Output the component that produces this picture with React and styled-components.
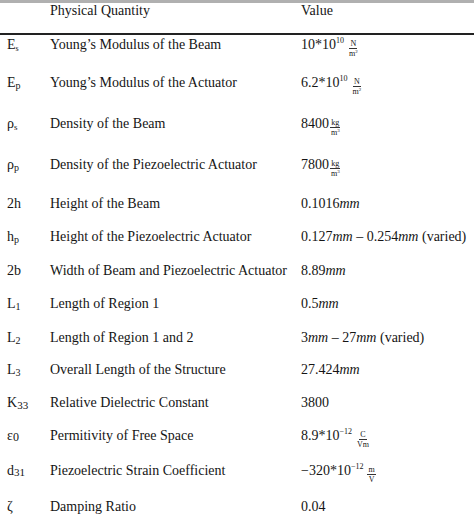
import styled, { createGlobalStyle } from "styled-components";

const GlobalStyle = createGlobalStyle`
  html, body {
    margin: 0;
    padding: 0;
    background: #ffffff;
  }
  body {
    font-family: "Liberation Serif", serif;
    color: #151515;
  }
`;

const Table = styled.div`
  width: 474px;
  display: flex;
  flex-direction: column;
  font-family: "Liberation Serif", "DejaVu Serif", serif;
`;

const TopRule = styled.div`
  height: 3px;
  background: #b0b0b0;
`;

const HeaderRow = styled.div`
  display: grid;
  grid-template-columns: 50px 251px 1fr;
  height: 30px;
  font-size: 14px;
  line-height: 16px;
  border-bottom: 2px solid #222222;
  margin-bottom: 1px;
`;

const Row = styled.div`
  display: grid;
  grid-template-columns: 50px 251px 1fr;
  height: ${({ h }) => h}px;
  font-size: 14px;
  line-height: 18px;
  align-items: start;
`;

const Symbol = styled.div`
  padding-left: 7px;
  white-space: nowrap;
`;

const Cell = styled.div`
  white-space: nowrap;
`;

const Sub = styled.sub`
  font-size: ${({ size }) => size || 10}px;
  vertical-align: ${({ drop }) => drop || -2}px;
  line-height: 0;
`;

const Sup = styled.sup`
  font-size: 8px;
  vertical-align: 6px;
  line-height: 0;
`;

const Frac = styled.span`
  display: inline-flex;
  flex-direction: column;
  align-items: center;
  vertical-align: middle;
  font-size: 8px;
  line-height: 7px;
  margin-left: ${({ gap }) => gap || 4}px;
  position: relative;
  top: 3px;
`;

const Num = styled.span`
  padding: 0 1px 1px;
  border-bottom: 1px solid #333333;
`;

const Den = styled.span`
  padding: 1px 1px 0;
`;

const Sq = styled.sup`
  font-size: 5px;
  vertical-align: 3px;
  line-height: 0;
`;

const rows = [
  {
    h: 38,
    sym: <>E<Sub size={8}>s</Sub></>,
    name: "Young\u2019s Modulus of the Beam",
    value: (
      <>
        10*10<Sup>10</Sup>
        <Frac><Num>N</Num><Den>m<Sq>2</Sq></Den></Frac>
      </>
    ),
  },
  {
    h: 41,
    sym: <>E<Sub size={10}>p</Sub></>,
    name: "Young\u2019s Modulus of the Actuator",
    value: (
      <>
        6.2*10<Sup>10</Sup>
        <Frac><Num>N</Num><Den>m<Sq>2</Sq></Den></Frac>
      </>
    ),
  },
  {
    h: 41,
    sym: <>ρ<Sub size={9}>s</Sub></>,
    name: "Density of the Beam",
    value: (
      <>
        8400
        <Frac gap={1}><Num>kg</Num><Den>m<Sq>3</Sq></Den></Frac>
      </>
    ),
  },
  {
    h: 39,
    sym: <>ρ<Sub size={10}>p</Sub></>,
    name: "Density of the Piezoelectric Actuator",
    value: (
      <>
        7800
        <Frac gap={1}><Num>kg</Num><Den>m<Sq>3</Sq></Den></Frac>
      </>
    ),
  },
  { h: 33, sym: "2h", name: "Height of the Beam", value: <>0.1016<i>mm</i></> },
  {
    h: 34,
    sym: <>h<Sub size={10}>p</Sub></>,
    name: "Height of the Piezoelectric Actuator",
    value: <>0.127<i>mm</i> – 0.254<i>mm</i> (varied)</>,
  },
  { h: 33, sym: "2b", name: "Width of Beam and Piezoelectric Actuator", value: <>8.89<i>mm</i></> },
  { h: 34, sym: <>L<Sub>1</Sub></>, name: "Length of Region 1", value: <>0.5<i>mm</i></> },
  {
    h: 32,
    sym: <>L<Sub>2</Sub></>,
    name: "Length of Region 1 and 2",
    value: <>3<i>mm</i> – 27<i>mm</i> (varied)</>,
  },
  { h: 33, sym: <>L<Sub>3</Sub></>, name: "Overall Length of the Structure", value: <>27.424<i>mm</i></> },
  { h: 33, sym: <>K<Sub size={11}>33</Sub></>, name: "Relative Dielectric Constant", value: "3800" },
  {
    h: 35,
    sym: <>ε<Sub size={12} drop={-1}>0</Sub></>,
    name: "Permitivity of Free Space",
    value: (
      <>
        8.9*10<Sup>−12</Sup>
        <Frac><Num>C</Num><Den>Vm</Den></Frac>
      </>
    ),
  },
  {
    h: 36,
    sym: <>d<Sub size={11} drop={-1}>31</Sub></>,
    name: "Piezoelectric Strain Coefficient",
    value: (
      <>
        −320*10<Sup>−12</Sup>
        <Frac><Num>m</Num><Den>V</Den></Frac>
      </>
    ),
  },
  { h: 20, sym: "ζ", name: "Damping Ratio", value: "0.04" },
];

export default function App() {
  return (
    <>
      <GlobalStyle />
      <Table>
        <TopRule />
        <HeaderRow>
          <Symbol />
          <Cell>Physical Quantity</Cell>
          <Cell>Value</Cell>
        </HeaderRow>
        {rows.map((r, i) => (
          <Row key={i} h={r.h}>
            <Symbol>{r.sym}</Symbol>
            <Cell>{r.name}</Cell>
            <Cell>{r.value}</Cell>
          </Row>
        ))}
      </Table>
    </>
  );
}
